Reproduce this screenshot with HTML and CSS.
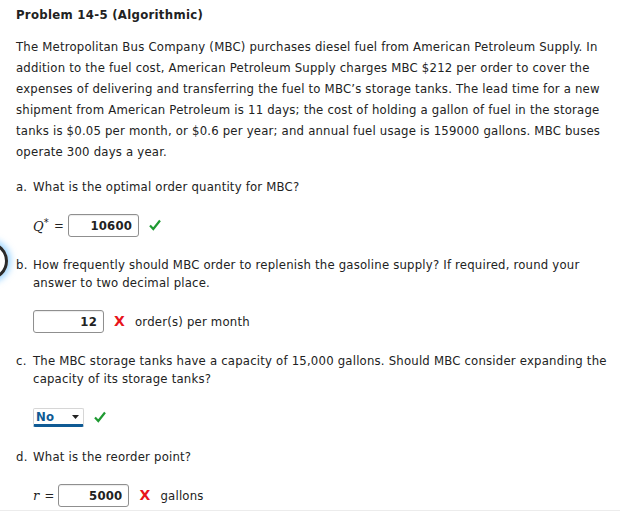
FILE: index.html
```html
<!DOCTYPE html>
<html>
<head>
<meta charset="utf-8">
<link rel="stylesheet" href="styles.css">
</head>
<body>
<div class="page">
  <h1 class="title">Problem 14-5 (Algorithmic)</h1>
  <p class="intro">The Metropolitan Bus Company (MBC) purchases diesel fuel from American Petroleum Supply. In addition to the fuel cost, American Petroleum Supply charges MBC $212 per order to cover the expenses of delivering and transferring the fuel to MBC’s storage tanks. The lead time for a new shipment from American Petroleum is 11 days; the cost of holding a gallon of fuel in the storage tanks is $0.05 per month, or $0.6 per year; and annual fuel usage is 159000 gallons. MBC buses operate 300 days a year.</p>

  <div class="q">
    <div class="qtext"><span class="lbl">a.</span><span>What is the optimal order quantity for MBC?</span></div>
    <div class="ans ans-a">
      <span class="var">Q<sup>*</sup></span><span class="eq">=</span>
      <span class="box">10600</span>
      <svg class="check" width="12" height="12" viewBox="0 0 12 12"><path d="M1 6.5 L4.3 10 L11 1.5" fill="none" stroke="#1f9a32" stroke-width="2.2"/></svg>
    </div>
  </div>

  <div class="q qb">
    <div class="focus"></div>
    <div class="qtext"><span class="lbl">b.</span><span>How frequently should MBC order to replenish the gasoline supply? If required, round your answer to two decimal place.</span></div>
    <div class="ans ans-b">
      <span class="box">12</span>
      <span class="cross">X</span>
      <span class="unit">order(s) per month</span>
    </div>
  </div>

  <div class="q">
    <div class="qtext"><span class="lbl">c.</span><span>The MBC storage tanks have a capacity of 15,000 gallons. Should MBC consider expanding the capacity of its storage tanks?</span></div>
    <div class="ans ans-c">
      <span class="select"><span class="sel-val">No</span><svg class="caret" width="7" height="4" viewBox="0 0 7 4"><path d="M0 0 H7 L3.5 4 Z" fill="#222"/></svg></span>
      <svg class="check" width="12" height="12" viewBox="0 0 12 12"><path d="M1 6.5 L4.3 10 L11 1.5" fill="none" stroke="#1f9a32" stroke-width="2.2"/></svg>
    </div>
  </div>

  <div class="q">
    <div class="qtext"><span class="lbl">d.</span><span>What is the reorder point?</span></div>
    <div class="ans ans-d">
      <span class="var">r</span><span class="eq">=</span>
      <span class="box">5000</span>
      <span class="cross">X</span>
      <span class="unit">gallons</span>
    </div>
  </div>
</div>
</body>
</html>
```

FILE: styles.css
```css
html, body {
  margin: 0;
  padding: 0;
  background: #fff;
}
body {
  font-family: "DejaVu Sans Condensed", "DejaVu Sans", sans-serif;
  font-size: 13px;
  letter-spacing: 0.2px;
  color: #222;
  overflow: hidden;
}
.page {
  padding: 7px 8px 0 16px;
  height: 503px;
  border-bottom: 1px solid #ececec;
}
.title {
  font-size: 13px;
  font-weight: bold;
  letter-spacing: 0.3px;
  margin: 0;
  line-height: 16px;
}
.intro {
  margin: 13px 0 0 0;
  line-height: 21px;
}
.q {
  margin-top: 19px;
  position: relative;
}
.intro + .q {
  margin-top: 16px;
}
.qtext {
  display: flex;
  line-height: 18px;
}
.lbl {
  flex: 0 0 auto;
  width: 17px;
}
.ans {
  display: flex;
  align-items: center;
  margin-top: 17px;
  padding-left: 17px;
  height: 24px;
}
.var {
  font-family: "DejaVu Serif", serif;
  font-style: italic;
  font-size: 13px;
}
.var sup {
  font-size: 10px;
  vertical-align: 5px;
  font-style: normal;
  font-family: "DejaVu Sans", sans-serif;
}
.eq {
  margin: 0 4px 0 5px;
}
.box {
  box-sizing: border-box;
  width: 71px;
  height: 23px;
  border: 1px solid #8f8f8f;
  border-radius: 3px;
  text-align: right;
  font-weight: bold;
  padding-right: 6px;
  line-height: 21px;
  box-shadow: inset 0 1px 1px rgba(0,0,0,0.08);
}
.check {
  margin-left: 10px;
}
.cross {
  color: #e8141c;
  font-weight: bold;
  font-family: "DejaVu Sans", sans-serif;
  font-size: 14px;
  margin-left: 10px;
}
.unit {
  margin-left: 10px;
}
.focus {
  position: absolute;
  left: -46px;
  top: -14px;
  width: 32px;
  height: 32px;
  border: 3px solid #2a2a2a;
  border-radius: 50%;
  box-shadow: 0 0 6px 3px rgba(80,180,255,0.55);
}
.select {
  box-sizing: border-box;
  width: 51px;
  height: 19px;
  display: flex;
  align-items: center;
  justify-content: space-between;
  padding: 0 4px 0 2px;
  border: 1px solid #d6d6d6;
  border-bottom: 3px solid #0f5a94;
  border-radius: 2px;
  color: #0f5a94;
  font-weight: bold;
}
.caret {
  margin-top: 1px;
}
```
